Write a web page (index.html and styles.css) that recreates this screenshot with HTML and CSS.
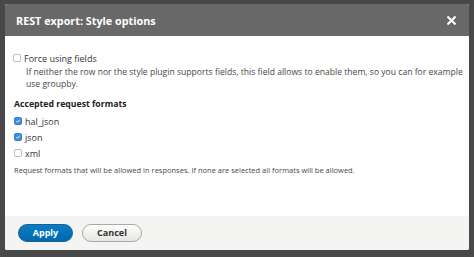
FILE: index.html
```html
<!DOCTYPE html>
<html lang="en">
<head>
<meta charset="utf-8">
<title>REST export: Style options</title>
<link rel="stylesheet" href="styles.css">
</head>
<body>
<div class="dialog">
  <div class="titlebar">
    <span class="title">REST export: Style options</span>
    <span class="close" aria-label="Close">
      <svg width="9" height="9" viewBox="0 0 9 9"><path d="M1.2 1.2 L7.8 7.8 M7.8 1.2 L1.2 7.8" stroke="#fff" stroke-width="2.1" stroke-linecap="square"/></svg>
    </span>
  </div>
  <div class="content">
    <div class="item">
      <label class="check"><span class="box"></span><span class="label">Force using fields</span></label>
      <div class="desc indent">If neither the row nor the style plugin supports fields, this field allows to enable them, so you can for example use groupby.</div>
    </div>
    <div class="group">
      <div class="heading">Accepted request formats</div>
      <label class="check row"><span class="box on"><svg width="8" height="8" viewBox="0 0 8 8"><path d="M1.8 4.2 L3.3 5.7 L6.2 2.3" fill="none" stroke="#fff" stroke-width="1.3"/></svg></span><span class="label">hal_json</span></label>
      <label class="check row"><span class="box on"><svg width="8" height="8" viewBox="0 0 8 8"><path d="M1.8 4.2 L3.3 5.7 L6.2 2.3" fill="none" stroke="#fff" stroke-width="1.3"/></svg></span><span class="label">json</span></label>
      <label class="check row"><span class="box"></span><span class="label">xml</span></label>
      <div class="desc foot">Request formats that will be allowed in responses. If none are selected all formats will be allowed.</div>
    </div>
  </div>
  <div class="footer">
    <button class="btn primary">Apply</button>
    <button class="btn">Cancel</button>
  </div>
</div>
</body>
</html>
```
FILE: styles.css
```css
html, body {
  margin: 0;
  padding: 0;
}
body {
  background: #484848;
  width: 474px;
  height: 257px;
  overflow: hidden;
  font-family: "Open Sans", "DejaVu Sans", sans-serif;
  color: #333;
}
.dialog {
  margin: 4px 0 0 5px;
  width: 464px;
  height: 246px;
  display: flex;
  flex-direction: column;
  border-radius: 2px;
  overflow: hidden;
  background: #fff;
}
.titlebar {
  height: 32px;
  flex: none;
  background: #686868;
  display: flex;
  align-items: center;
  justify-content: space-between;
  padding: 0 13px 0 11px;
}
.title {
  color: #fff;
  font-weight: 700;
  font-size: 10.8px;
}
.close {
  display: flex;
  width: 9px;
  height: 9px;
}
.content {
  flex: 1;
  padding: 18px 6px 0 8px;
}
.check {
  display: flex;
  align-items: center;
  height: 8px;
}
.box {
  width: 6px;
  height: 6px;
  border: 1px solid #bdbdbd;
  border-radius: 2px;
  background: #fff;
  flex: none;
  display: flex;
  align-items: center;
  justify-content: center;
}
.box.on {
  background: #3b8ede;
  border-color: #3583d0;
}
.label {
  font-size: 9px;
  margin-left: 3px;
  color: #333;
}
.desc {
  font-size: 8.6px;
  line-height: 12px;
  color: #484848;
}
.indent {
  margin-left: 13px;
  margin-top: 4px;
}
.group {
  margin-top: 9px;
  padding-left: 1px;
}
.heading {
  font-weight: 700;
  font-size: 8.7px;
  color: #222;
  line-height: 10px;
  margin-bottom: 8px;
}
.row {
  margin-top: 8px;
}
.heading + .row {
  margin-top: 0;
}
.foot {
  margin-top: 7px;
  font-size: 7.5px;
}
.footer {
  height: 34px;
  flex: none;
  background: #f4f4f2;
  display: flex;
  align-items: center;
  padding-left: 13px;
  gap: 9px;
  box-sizing: border-box;
  padding-bottom: 1px;
}
.btn {
  font-family: inherit;
  font-weight: 700;
  font-size: 9px;
  height: 18px;
  width: 60px;
  border-radius: 9px;
  border: 1px solid #a8a8a8;
  background: linear-gradient(#fdfdfd, #e6e6e3);
  color: #333;
  padding: 0;
  display: flex;
  align-items: center;
  justify-content: center;
}
.btn.primary {
  width: 55px;
  background: linear-gradient(#0b7cc4, #0069ac);
  border-color: #1a5f95;
  color: #fff;
}
```
